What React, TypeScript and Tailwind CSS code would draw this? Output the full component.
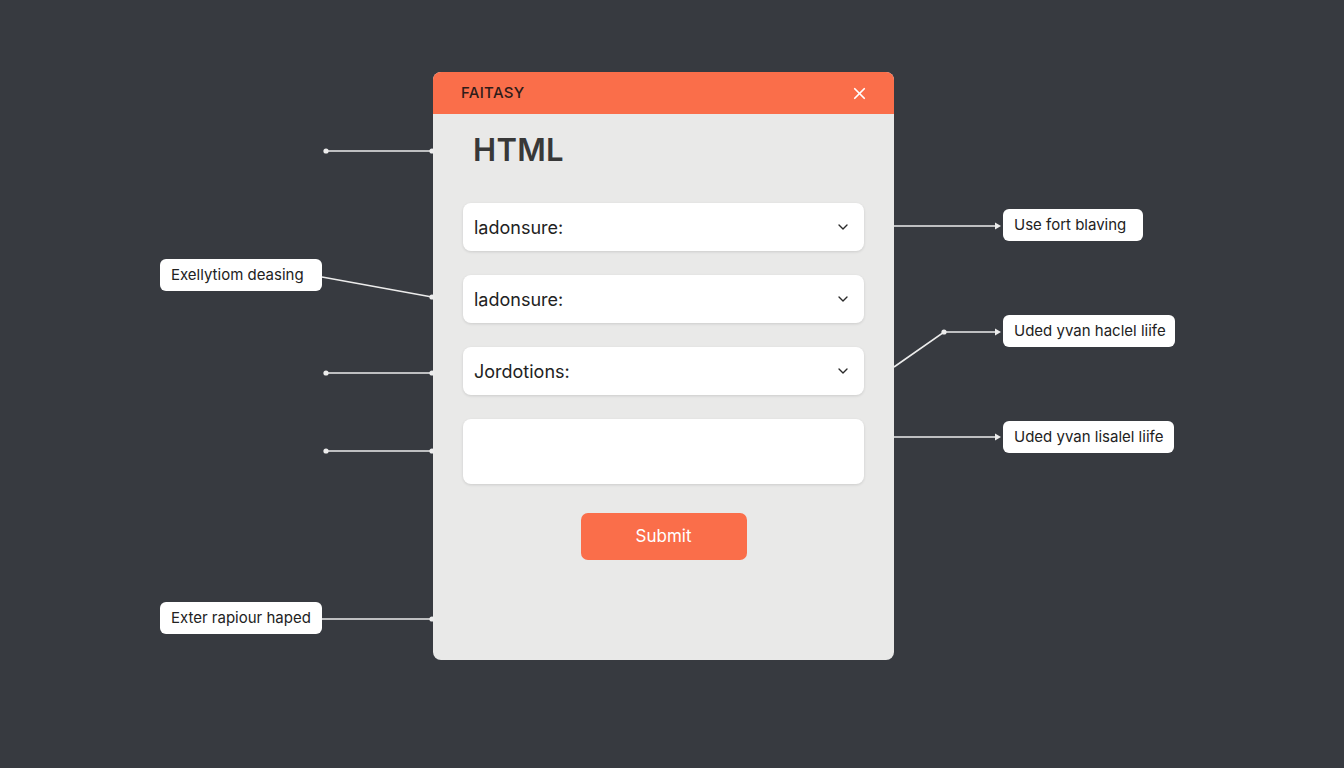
import { ChevronDown, X } from 'lucide-react';

const fields = ['ladonsure:', 'ladonsure:', 'Jordotions:'];

type Note = { text: string; left: number; top: number; width: number };

const notes: Note[] = [
  { text: 'Exellytiom deasing', left: 160, top: 259, width: 162 },
  { text: 'Exter rapiour haped', left: 160, top: 602, width: 162 },
  { text: 'Use fort blaving', left: 1003, top: 209, width: 140 },
  { text: 'Uded yvan haclel liife', left: 1003, top: 315, width: 172 },
  { text: 'Uded yvan lisalel liife', left: 1003, top: 421, width: 171 },
];

function Connectors() {
  const stroke = '#ececec';
  const dot = (x: number, y: number) => <circle cx={x} cy={y} r={2.6} fill={stroke} />;
  const arrow = (x: number, y: number) => (
    <path d={`M${x - 6} ${y - 3.5} L${x} ${y} L${x - 6} ${y + 3.5} Z`} fill={stroke} />
  );
  return (
    <svg className="absolute inset-0 pointer-events-none" width={1344} height={768}>
      <g stroke={stroke} strokeWidth={1.6} fill="none">
        <line x1={326} y1={151} x2={432} y2={151} />
        <line x1={322} y1={277} x2={432} y2={297} />
        <line x1={326} y1={373} x2={432} y2={373} />
        <line x1={326} y1={451} x2={432} y2={451} />
        <line x1={322} y1={619} x2={432} y2={619} />
        <line x1={894} y1={226} x2={996} y2={226} />
        <polyline points="894,367 944,332 996,332" />
        <line x1={894} y1={437} x2={996} y2={437} />
      </g>
      {dot(326, 151)}
      {dot(432, 151)}
      {dot(432, 297)}
      {dot(326, 373)}
      {dot(432, 373)}
      {dot(326, 451)}
      {dot(432, 451)}
      {dot(432, 619)}
      {dot(944, 332)}
      {arrow(1001, 226)}
      {arrow(1001, 332)}
      {arrow(1001, 437)}
    </svg>
  );
}

export default function App() {
  return (
    <div
      className="relative w-[1344px] h-[768px] overflow-hidden bg-[#373a40]"
      style={{ fontFamily: 'Inter, "Open Sans", sans-serif' }}
    >
      <div className="pl-[433px] pt-[72px]">
        <div className="w-[461px] h-[588px] rounded-[8px] overflow-hidden bg-[#e9e9e8] flex flex-col">
          <div className="h-[42px] bg-[#fa6e4a] flex items-center justify-between pl-[28px] pr-[25px]">
            <span className="text-[15px] font-medium tracking-[0.02em] text-[#2e1c19]">FAITASY</span>
            <X className="w-[19px] h-[19px] text-white" strokeWidth={2.2} />
          </div>

          <div className="flex flex-col px-[30px] pt-[16px]">
            <h1 className="pl-[10px] h-[40px] leading-[40px] text-[31px] font-semibold tracking-[0.01em] text-[#383838]">
              HTML
            </h1>

            <div className="mt-[33px] flex flex-col gap-[24px]">
              {fields.map((label, i) => (
                <div
                  key={i}
                  className="h-[48px] rounded-[8px] bg-white shadow-[0_1px_3px_rgba(0,0,0,0.12)] flex items-center justify-between pl-[11px] pr-[13px]"
                >
                  <span className="text-[18px] text-[#222]">{label}</span>
                  <ChevronDown className="w-[16px] h-[16px] text-[#2a2a2a]" strokeWidth={2} />
                </div>
              ))}
              <div className="h-[65px] rounded-[8px] bg-white shadow-[0_1px_3px_rgba(0,0,0,0.12)]" />
            </div>

            <button className="mt-[29px] mx-auto w-[166px] h-[47px] rounded-[7px] bg-[#fa6e4a] text-white text-[17px]">
              Submit
            </button>
          </div>
        </div>
      </div>

      <Connectors />

      {notes.map((n) => (
        <div
          key={n.text}
          className="absolute h-[32px] rounded-[6px] bg-white flex items-center pl-[11px] text-[15px] text-[#222]"
          style={{ left: n.left, top: n.top, width: n.width }}
        >
          {n.text}
        </div>
      ))}
    </div>
  );
}
